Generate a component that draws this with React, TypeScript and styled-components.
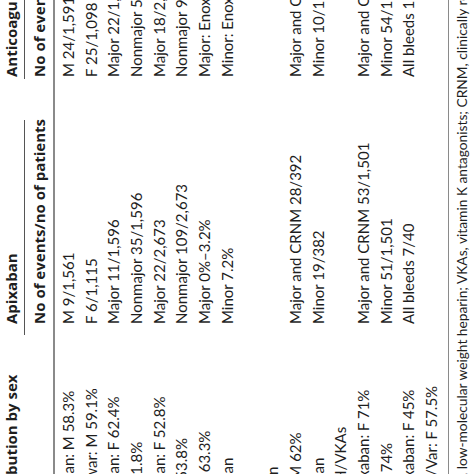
import styled, { createGlobalStyle } from 'styled-components';

const GlobalStyle = createGlobalStyle`
  html, body {
    margin: 0;
    padding: 0;
    background: #fff;
  }
  body {
    font-family: Lato, "Open Sans", "Liberation Sans", sans-serif;
    color: #1e1e1e;
  }
`;

// the page is printed sideways, so the whole sheet is turned a quarter
const Page = styled.div`
  width: 474px;
  height: 474px;
  overflow: hidden;
  position: relative;
`;

const Sheet = styled.div`
  width: 474px;
  height: 474px;
  transform: rotate(-90deg);
  transform-origin: 50% 50%;
  overflow: hidden;
`;

const Table = styled.div`
  margin-left: -45px;
  width: 720px;
  font-size: 15px;
`;

const Row = styled.div`
  display: grid;
  grid-template-columns: 184px 256px 260px;
`;

const HeadRow = styled(Row)`
  font-family: "Open Sans", Lato, sans-serif;
  font-weight: 700;
  line-height: 22px;
`;

const SubRow = styled(HeadRow)`
  padding: 3px 0 3px;
  border-bottom: 2px solid #8a8a8a;
`;

const Body = styled.div`
  padding: 2px 0 5px;
  border-bottom: 1.5px solid #8a8a8a;
`;

const BodyRow = styled(Row)`
  height: 22.7px;
  line-height: 22.7px;
`;

const Cell = styled.div<{ $pad?: number }>`
  white-space: nowrap;
  padding-left: ${(p) => p.$pad ?? 0}px;
`;

const GroupHead = styled.div<{ $pad: number; $gap: number }>`
  white-space: nowrap;
  padding: 0 0 2px ${(p) => p.$pad}px;
  margin-right: ${(p) => p.$gap}px;
  border-bottom: 1px solid #555;
`;

const Footer = styled.div`
  margin-left: -92px;
  padding-top: 2px;
  font-size: 13.75px;
  line-height: 22px;
  white-space: nowrap;
`;

const rows: [string, string, string][] = [
  ['Apixaban: M 58.3%', 'M 9/1,561', 'M 24/1,591'],
  ['Enox/war: M 59.1%', 'F 6/1,115', 'F 25/1,098'],
  ['Apixaban: F 62.4%', 'Major 11/1,596', 'Major 22/1,689'],
  ['Total 51.8%', 'Nonmajor 35/1,596', 'Nonmajor 57/1,689'],
  ['Apixaban: F 52.8%', 'Major 22/2,673', 'Major 18/2,658'],
  ['Total: 53.8%', 'Nonmajor 109/2,673', 'Nonmajor 98/2,658'],
  ['Males: 63.3%', 'Major 0%–3.2%', 'Major: Enoxaparin 1.1%'],
  ['Apixaban', 'Minor 7.2%', 'Minor: Enoxaparin 8.3%'],
  ['vs', '', ''],
  ['Heparin', '', ''],
  ['Total: M 62%', 'Major and CRNM 28/392', 'Major and CRNM 14/388'],
  ['Apixaban', 'Minor 19/382', 'Minor 10/188'],
  ['LMWH/VKAs', '', ''],
  ['Rivaroxaban: F 71%', 'Major and CRNM 53/1,501', 'Major and CRNM 83/1,497'],
  ['Males: 74%', 'Minor 51/1,501', 'Minor 54/1,497'],
  ['Rivaroxaban: F 45%', 'All bleeds 7/40', 'All bleeds 11/40'],
  ['NOAC/Var: F 57.5%', '', ''],
];

export default function App() {
  return (
    <Page>
      <GlobalStyle />
      <Sheet>
        <Table>
          <HeadRow>
            <Cell $pad={3}>Distribution by sex</Cell>
            <GroupHead $pad={11} $gap={41}>
              Apixaban
            </GroupHead>
            <GroupHead $pad={2} $gap={0}>
              Anticoagulant
            </GroupHead>
          </HeadRow>
          <SubRow>
            <Cell />
            <Cell $pad={11}>No of events/no of patients</Cell>
            <Cell $pad={2}>No of events/no of patients</Cell>
          </SubRow>
          <Body>
            {rows.map(([sex, apix, other], i) => (
              <BodyRow key={i}>
                <Cell>{sex}</Cell>
                <Cell $pad={11}>{apix}</Cell>
                <Cell $pad={2}>{other}</Cell>
              </BodyRow>
            ))}
          </Body>
          <Footer>
            Abbreviations: LMWH, low-molecular weight heparin; VKAs, vitamin K antagonists; CRNM, clinically
            relevant nonmajor.
          </Footer>
        </Table>
      </Sheet>
    </Page>
  );
}
